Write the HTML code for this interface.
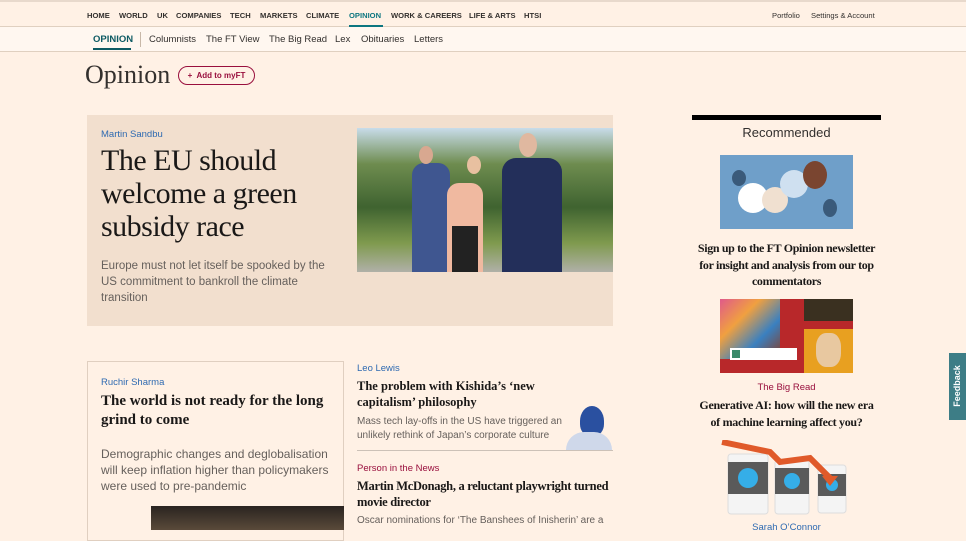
<!DOCTYPE html>
<html><head><meta charset="utf-8"><style>
*{margin:0;padding:0;box-sizing:border-box}
body{width:966px;height:530px;overflow:hidden;background:#fff1e5;font-family:"Liberation Sans",sans-serif;color:#33302e;position:relative}
.a{position:absolute}
.serif{font-family:"Liberation Serif",serif}
.nav1{top:0;left:0;width:966px;height:27px;border-top:2px solid #e8d9cc;border-bottom:1px solid #e0d0c0}
.nav1 span{position:absolute;top:9px;font-size:7.6px;font-weight:bold;color:#33302e;white-space:nowrap}
.nav2{top:27px;left:0;width:966px;height:25px;background:#fff7f0;border-bottom:1px solid #e0d0c0}
.nav2 span{position:absolute;top:7px;font-size:9.5px;color:#33302e}
.blue{color:#2e6ab1}
.red{color:#990f3d}
.h{font-family:"Liberation Serif",serif;color:#1a1817;font-weight:bold}
.st{color:#66605c}
</style></head><body>
<div class="a nav1">
<span style="left:87px">HOME</span><span style="left:119px">WORLD</span><span style="left:157px">UK</span><span style="left:176px">COMPANIES</span><span style="left:230px">TECH</span><span style="left:260px">MARKETS</span><span style="left:306px">CLIMATE</span><span style="left:349px;color:#0d7680">OPINION</span><span style="left:391px">WORK &amp; CAREERS</span><span style="left:469px">LIFE &amp; ARTS</span><span style="left:524px">HTSI</span>
<div class="a" style="left:349px;top:23px;width:34px;height:2px;background:#0d7680"></div>
<span style="left:772px;font-weight:normal">Portfolio</span><span style="left:811px;font-weight:normal">Settings &amp; Account</span>
</div>
<div class="a nav2">
<span style="left:93px;font-weight:bold;color:#0d5a63">OPINION</span>
<div class="a" style="left:93px;top:21px;width:38px;height:2px;background:#0d5a63"></div>
<div class="a" style="left:140px;top:5px;width:1px;height:15px;background:#c8b8a8"></div>
<span style="left:149px">Columnists</span><span style="left:206px">The FT View</span><span style="left:269px">The Big Read</span><span style="left:335px">Lex</span><span style="left:361px">Obituaries</span><span style="left:414px">Letters</span>
</div>
<div class="a serif" style="left:85px;top:60px;font-size:26px;color:#33302e">Opinion</div>
<div class="a" style="left:178px;top:66px;width:77px;height:19px;border:1px solid #990f3d;border-radius:10px;font-size:8px;font-weight:bold;color:#990f3d;text-align:center;line-height:17px">+&nbsp; Add to myFT</div>

<div class="a" style="left:87px;top:115px;width:526px;height:211px;background:#f2dfce"></div>
<div class="a blue" style="left:101px;top:129px;font-size:9.5px">Martin Sandbu</div>
<div class="a h" style="left:101px;top:144px;font-size:30px;line-height:33px;width:240px;font-weight:normal;letter-spacing:-0.5px">The EU should welcome a green subsidy race</div>
<div class="a st" style="left:101px;top:258px;font-size:11.5px;line-height:16px;width:228px">Europe must not let itself be spooked by the US commitment to bankroll the climate transition</div>
<div class="a" style="left:357px;top:128px;width:256px;height:144px;background:linear-gradient(180deg,#c8dcea 0%,#6e8c4f 25%,#3f6330 55%,#7f9a4e 80%,#b0b0a8 100%);overflow:hidden">
<div class="a" style="left:55px;top:35px;width:38px;height:109px;background:#3f5690;border-radius:12px 12px 0 0"></div>
<div class="a" style="left:90px;top:55px;width:36px;height:90px;background:#f0b9a0;border-radius:12px 12px 0 0"></div>
<div class="a" style="left:95px;top:98px;width:26px;height:46px;background:#222"></div>
<div class="a" style="left:145px;top:30px;width:60px;height:114px;background:#232f5a;border-radius:14px 14px 0 0"></div>
<div class="a" style="left:162px;top:5px;width:18px;height:24px;background:#e0b8a0;border-radius:50%"></div>
<div class="a" style="left:110px;top:28px;width:14px;height:18px;background:#e8c0a0;border-radius:50%"></div>
<div class="a" style="left:62px;top:18px;width:14px;height:18px;background:#d8a890;border-radius:50%"></div>
</div>

<div class="a" style="left:87px;top:361px;width:257px;height:180px;border:1px solid #e0cfc0"></div>
<div class="a blue" style="left:101px;top:377px;font-size:9.5px">Ruchir Sharma</div>
<div class="a h" style="left:101px;top:392px;font-size:15px;line-height:19px;width:230px">The world is not ready for the long grind to come</div>
<div class="a st" style="left:101px;top:446px;font-size:12px;line-height:16px;width:235px">Demographic changes and deglobalisation will keep inflation higher than policymakers were used to pre-pandemic</div>
<div class="a" style="left:151px;top:506px;width:193px;height:24px;background:linear-gradient(180deg,#2a2420,#5a4a3a)"></div>

<div class="a blue" style="left:357px;top:363px;font-size:9.5px">Leo Lewis</div>
<div class="a h" style="left:357px;top:378px;font-size:12.5px;line-height:16px;width:190px">The problem with Kishida’s ‘new capitalism’ philosophy</div>
<div class="a st" style="left:357px;top:415px;font-size:10px;line-height:14px;width:210px">Mass tech lay-offs in the US have triggered an unlikely rethink of Japan’s corporate culture</div>
<div class="a" style="left:580px;top:406px;width:24px;height:30px;background:#2a50a0;border-radius:50% 50% 40% 40%"></div>
<div class="a" style="left:566px;top:432px;width:46px;height:18px;background:#cfd8ea;border-radius:20px 20px 0 0"></div>
<div class="a" style="left:357px;top:450px;width:256px;height:1px;background:#ccc1b7"></div>
<div class="a red" style="left:357px;top:463px;font-size:9.5px">Person in the News</div>
<div class="a h" style="left:357px;top:478px;font-size:12.5px;line-height:16px;width:262px;letter-spacing:-0.3px">Martin McDonagh, a reluctant playwright turned movie director</div>
<div class="a st" style="left:357px;top:515px;font-size:10px">Oscar nominations for ‘The Banshees of Inisherin’ are a</div>

<div class="a" style="left:692px;top:115px;width:189px;height:5px;background:#000"></div>
<div class="a" style="left:692px;top:125px;width:189px;text-align:center;font-size:13px;color:#33302e">Recommended</div>
<div class="a" style="left:720px;top:155px;width:133px;height:74px;background:#6f9fc9;overflow:hidden">
<div class="a" style="left:18px;top:28px;width:30px;height:30px;border-radius:50%;background:#fff"></div>
<div class="a" style="left:42px;top:32px;width:26px;height:26px;border-radius:50%;background:#f0e0d0"></div>
<div class="a" style="left:60px;top:15px;width:28px;height:28px;border-radius:50%;background:#cfe0f0"></div>
<div class="a" style="left:83px;top:6px;width:24px;height:28px;border-radius:50%;background:#7a4530"></div>
<div class="a" style="left:12px;top:15px;width:14px;height:16px;border-radius:50%;background:#3a5a7a"></div>
<div class="a" style="left:103px;top:44px;width:14px;height:18px;border-radius:50%;background:#3a5a7a"></div>
</div>
<div class="a h" style="left:690px;top:240px;width:193px;text-align:center;font-size:12px;line-height:16.5px;letter-spacing:-0.35px">Sign up to the FT Opinion newsletter for insight and analysis from our top commentators</div>
<div class="a" style="left:720px;top:299px;width:133px;height:74px;background:#b8282a;overflow:hidden">
<div class="a" style="left:0;top:0;width:60px;height:60px;background:linear-gradient(135deg,#e05a8a,#f0a040,#3a80c0,#8a3a20)"></div>
<div class="a" style="left:84px;top:0;width:49px;height:22px;background:#3a3020"></div>
<div class="a" style="left:84px;top:30px;width:49px;height:44px;background:#e8a020"></div>
<div class="a" style="left:96px;top:34px;width:25px;height:34px;background:#e8c8a0;border-radius:40%"></div>
<div class="a" style="left:10px;top:49px;width:67px;height:12px;background:#fff"></div>
<div class="a" style="left:12px;top:51px;width:8px;height:8px;background:#3a8a6a"></div>
</div>
<div class="a red" style="left:692px;top:382px;width:189px;text-align:center;font-size:9.5px">The Big Read</div>
<div class="a h" style="left:695px;top:397px;width:183px;text-align:center;font-size:12px;line-height:16.5px;letter-spacing:-0.3px">Generative AI: how will the new era of machine learning affect you?</div>
<svg class="a" style="left:720px;top:440px" width="133" height="75">
<g fill="#f4f4f4" stroke="#ddd"><rect x="8" y="14" width="40" height="60" rx="3"/><rect x="55" y="20" width="34" height="54" rx="3"/><rect x="98" y="25" width="28" height="48" rx="3"/></g>
<g fill="#5a5a5a"><rect x="8" y="22" width="40" height="32"/><rect x="55" y="28" width="34" height="26"/><rect x="98" y="34" width="28" height="22"/></g>
<g fill="#35aee8"><circle cx="28" cy="38" r="10"/><circle cx="72" cy="41" r="8"/><circle cx="112" cy="45" r="6"/></g>
<path d="M2 2 L50 12 L60 22 L90 18 L110 38" stroke="#e05a2a" stroke-width="6" fill="none"/>
<path d="M102 36 L118 36 L110 46Z" fill="#e05a2a"/>
</svg>
<div class="a blue" style="left:692px;top:522px;width:189px;text-align:center;font-size:9.5px">Sarah O’Connor</div>

<div class="a" style="left:949px;top:353px;width:17px;height:67px;background:#3d7d86"></div>
<div class="a" style="left:957px;top:386px;transform:translate(-50%,-50%) rotate(-90deg);font-size:9px;font-weight:bold;color:#fff;white-space:nowrap">Feedback</div>
</body></html>
